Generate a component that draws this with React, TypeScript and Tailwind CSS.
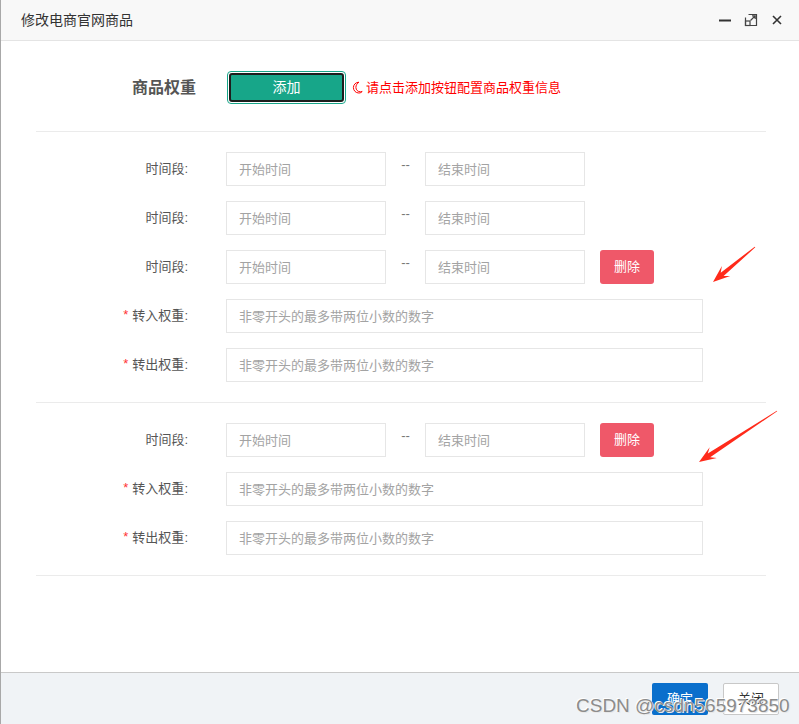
import React from "react";

// annotation arrow: thin tail widening into a swept head
function arrowPoints(x1: number, y1: number, x2: number, y2: number) {
  const dx = x2 - x1;
  const dy = y2 - y1;
  const len = Math.hypot(dx, dy);
  const ux = dx / len;
  const uy = dy / len;
  const nx = -uy;
  const ny = ux;
  const H = 17;
  const pts: [number, number][] = [
    [x1 + nx * 0.4, y1 + ny * 0.4],
    [x2 - ux * H * 0.7 + nx * 2.2, y2 - uy * H * 0.7 + ny * 2.2],
    [x2 - ux * H + nx * 6.5, y2 - uy * H + ny * 6.5],
    [x2, y2],
    [x2 - ux * H - nx * 6.5, y2 - uy * H - ny * 6.5],
    [x2 - ux * H * 0.7 - nx * 2.2, y2 - uy * H * 0.7 - ny * 2.2],
    [x1 - nx * 0.4, y1 - ny * 0.4],
  ];
  return pts.map((p) => p.map((v) => v.toFixed(1)).join(",")).join(" ");
}

function TextInput({ placeholder, wide }: { placeholder: string; wide?: boolean }) {
  return (
    <input
      readOnly
      placeholder={placeholder}
      className={`${wide ? "w-[477px]" : "w-[160px]"} h-[34px] border border-[#e6e6e6] bg-white pl-[12px] text-[13px] text-[#333] outline-none placeholder:text-[#a3a3a3]`}
    />
  );
}

function TimeRow({ withDelete }: { withDelete?: boolean }) {
  return (
    <div className="flex items-center h-[34px]">
      <div className="w-[152px] text-right text-[13px] text-[#555]">时间段:</div>
      <div className="ml-[38px] flex items-center">
        <TextInput placeholder="开始时间" />
        <div className="w-[39px] text-center text-[13px] text-[#777] -mt-[8px]">--</div>
        <TextInput placeholder="结束时间" />
        {withDelete && (
          <button className="ml-[15px] w-[54px] h-[34px] rounded-[3px] bg-[#ef5869] text-[13px] text-white">
            删除
          </button>
        )}
      </div>
    </div>
  );
}

function WeightRow({ label }: { label: string }) {
  return (
    <div className="flex items-center h-[34px]">
      <div className="w-[152px] text-right text-[13px] text-[#555]">
        <span className="text-[#f33] mr-[4px] relative -top-[1px]">*</span>
        {label}:
      </div>
      <div className="ml-[38px]">
        <TextInput placeholder="非零开头的最多带两位小数的数字" wide />
      </div>
    </div>
  );
}

export default function App() {
  return (
    <div className="relative w-[799px] h-[724px] flex flex-col bg-white border-l border-[#a8a8a8] overflow-hidden font-['Liberation_Sans','Noto_Sans_CJK_SC',sans-serif]">
      {/* title bar */}
      <div className="h-[41px] flex items-center bg-[#f8f8f8] border-b border-[#e4e4e4] pl-[20px] pr-[16px]">
        <div className="text-[14px] text-[#333]">修改电商官网商品</div>
        <div className="ml-auto flex items-center">
          <svg width="14" height="14" viewBox="0 0 14 14" className="mr-[12px]">
            <path d="M1 7.5H13" stroke="#333" strokeWidth="2" />
          </svg>
          <svg width="14" height="14" viewBox="0 0 14 14" className="mr-[13px]">
            <path d="M4.5 1.5H12.5V12.5H1.5V4.5" fill="none" stroke="#444" strokeWidth="1.2" />
            <rect x="1.5" y="8" width="4.5" height="4.5" fill="none" stroke="#444" strokeWidth="1.2" />
            <path d="M6.5 7.5L11 3M8 2.8H11.2V6" fill="none" stroke="#444" strokeWidth="1.2" />
          </svg>
          <svg width="12" height="12" viewBox="0 0 12 12">
            <path d="M2 2L10 10M10 2L2 10" stroke="#333" strokeWidth="1.6" />
          </svg>
        </div>
      </div>

      {/* body */}
      <div className="flex-1 pl-[35px] pr-[33px]">
        <div className="flex items-center pt-[30px] pb-[27px]">
          <div className="w-[160px] text-right text-[16px] font-semibold text-[#555]">商品权重</div>
          <div className="ml-[31px] border border-[#17a689] rounded-[4px] p-px">
            <button className="w-[115px] h-[29px] rounded-[3px] border-2 border-[#1d1d1d] bg-[#17a689] text-[14px] text-white">
              添加
            </button>
          </div>
          <div className="ml-[6px] flex items-center text-[13px] text-[#ff0000]">
            <svg width="11" height="13" viewBox="0 0 11 13" className="mr-[3px]">
              <path
                d="M7 1.2C3.8 1.2 1.4 3.6 1.4 6.6C1.4 9.6 3.8 12 6.8 12C8.3 12 9.4 11.4 10.2 10.5C9.6 10.7 9 10.8 8.4 10.8C5.8 10.8 3.9 8.9 3.9 6.4C3.9 4.2 5.1 2.3 7 1.2Z"
                fill="none"
                stroke="#ff0000"
                strokeWidth="1"
              />
            </svg>
            请点击添加按钮配置商品权重信息
          </div>
        </div>

        <div className="border-t border-[#ebebeb] pt-[20px] pb-[20px] flex flex-col gap-[15px]">
          <TimeRow />
          <TimeRow />
          <TimeRow withDelete />
          <WeightRow label="转入权重" />
          <WeightRow label="转出权重" />
        </div>

        <div className="border-t border-[#ebebeb] pt-[20px] pb-[20px] flex flex-col gap-[15px]">
          <TimeRow withDelete />
          <WeightRow label="转入权重" />
          <WeightRow label="转出权重" />
        </div>

        <div className="border-t border-[#ebebeb]" />
      </div>

      {/* footer */}
      <div className="h-[52px] flex items-start justify-end gap-[15px] pt-[10px] pr-[20px] bg-[#f0f3f6] border-t border-[#c9c9c9]">
        <button className="w-[56px] h-[32px] rounded-[2px] bg-[#0a6fcc] text-[13px] text-white">确定</button>
        <button className="w-[56px] h-[32px] rounded-[2px] bg-white border border-[#c8c8c8] text-[13px] text-[#333]">
          关闭
        </button>
      </div>

      {/* red annotation arrows */}
      <svg className="absolute inset-0 pointer-events-none" width="799" height="724" viewBox="0 0 799 724">
        <polygon points={arrowPoints(754, 247, 712, 282)} fill="#ff2a1a" />
        <polygon points={arrowPoints(776, 411, 698, 462)} fill="#ff2a1a" />
      </svg>

      {/* watermark */}
      <div className="absolute left-[575px] top-[694px] text-[19px] leading-[24px] text-[#8c8c8c] [text-shadow:1px_1px_0_#e8e8e8,-1px_-1px_0_#ffffff] whitespace-nowrap">
        CSDN @csdn565973850
      </div>
    </div>
  );
}
